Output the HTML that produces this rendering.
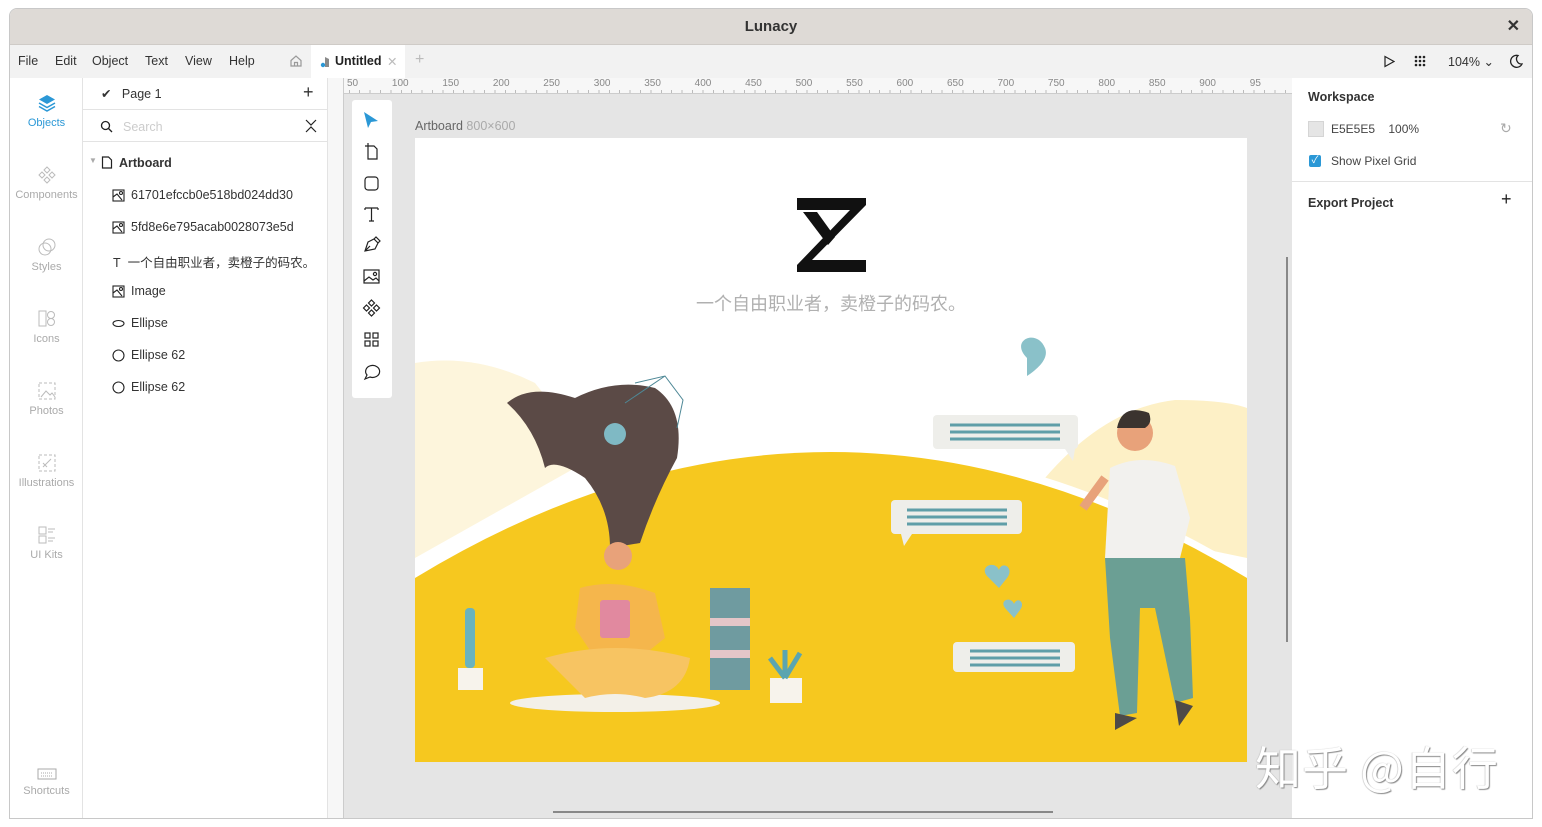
<!DOCTYPE html>
<html><head><meta charset="utf-8"><style>
*{margin:0;padding:0;box-sizing:border-box}
body{width:1542px;height:827px;background:#fff;font-family:"Liberation Sans","Noto Sans CJK SC",sans-serif;position:relative;overflow:hidden;font-size:12px;color:#222}
.a{position:absolute}
.win{left:9px;top:8px;width:1524px;height:811px;border:1px solid #c8c8c8;border-radius:8px 8px 0 0;overflow:hidden;background:#fff}
.title{left:0;top:0;width:100%;height:36px;background:#dedad6;border-bottom:1px solid #cfcbc7;text-align:center;font-weight:bold;font-size:15px;line-height:36px;color:#333}
.menu{left:0;top:36px;width:100%;height:33px;background:#f2f2f2}
.menu span{position:absolute;top:9px;font-size:12.5px;color:#333}
.rail{left:0;top:69px;width:73px;height:742px;background:#fff;border-right:1px solid #e3e3e3}
.rail .it{position:absolute;left:0;width:73px;text-align:center;font-size:11px;color:#aaa}
.layers{left:73px;top:69px;width:245px;height:742px;background:#fff;border-right:1px solid #e3e3e3}
.row{position:absolute;left:0;font-size:12.5px;color:#333}
.canvas{left:318px;top:69px;width:964px;height:742px;background:#e5e5e5}
.right{left:1282px;top:69px;width:242px;height:742px;background:#fff}
</style></head><body>
<div class="a win">
 <div class="a title">Lunacy<span class="a" style="right:12px;top:0;font-size:16px">✕</span></div>
 <div class="a menu">
  <span style="left:8px">File</span><span style="left:45px">Edit</span><span style="left:82px">Object</span><span style="left:135px">Text</span><span style="left:175px">View</span><span style="left:219px">Help</span>
  <svg class="a" style="left:279px;top:9px" width="14" height="14" viewBox="0 0 14 14" fill="none" stroke="#999" stroke-width="1.2"><path d="M2 6.5L7 2l5 4.5V12H2z M5.5 12V8.5h3V12"/></svg>
  <div class="a" style="left:301px;top:0;width:94px;height:33px;background:#fff"></div>
  <svg class="a" style="left:310px;top:11px" width="10" height="12"><path d="M5 1l4 2v8H5z" fill="#8a8a8a"/><circle cx="3" cy="9" r="2.2" fill="#2b98d6"/></svg>
  <span style="left:325px;font-weight:bold;color:#222">Untitled</span><span style="left:377px;color:#bbb">✕</span>
  <span style="left:405px;color:#bbb;font-size:16px;top:6px">+</span>
  <svg class="a" style="left:1373px;top:10px" width="12" height="13" fill="none" stroke="#222" stroke-width="1.2"><path d="M2 1.5L11 6.5 2 11.5z"/></svg>
  <svg class="a" style="left:1404px;top:10px" width="12" height="12" fill="#222"><circle cx="2" cy="2" r="1.3"/><circle cx="6" cy="2" r="1.3"/><circle cx="10" cy="2" r="1.3"/><circle cx="2" cy="6" r="1.3"/><circle cx="6" cy="6" r="1.3"/><circle cx="10" cy="6" r="1.3"/><circle cx="2" cy="10" r="1.3"/><circle cx="6" cy="10" r="1.3"/><circle cx="10" cy="10" r="1.3"/></svg>
  <span style="left:1438px">104% ⌄</span>
  <svg class="a" style="left:1499px;top:9px" width="14" height="14" fill="none" stroke="#222" stroke-width="1.3"><path d="M9 1.5A6 6 0 1 0 13 10 5 5 0 0 1 9 1.5z"/></svg>
 </div>
 <div class="a rail">
  <div class="it" style="top:14px;color:#2b98d6"><svg width="22" height="22" viewBox="0 0 22 22"><path d="M11 3l8 4.5-8 4.5-8-4.5z" fill="#2b98d6"/><path d="M3 11l8 4.5 8-4.5M3 14.5l8 4.5 8-4.5" fill="none" stroke="#2b98d6" stroke-width="1.5"/></svg><br>Objects</div>
  <div class="it" style="top:86px"><svg width="22" height="22" fill="none" stroke="#bbb"><path d="M11 3l3 3-3 3-3-3zM6 8l3 3-3 3-3-3zM16 8l3 3-3 3-3-3zM11 13l3 3-3 3-3-3z"/></svg><br>Components</div>
  <div class="it" style="top:158px"><svg width="22" height="22" fill="none" stroke="#bbb"><circle cx="9" cy="13" r="6"/><circle cx="13" cy="9" r="6"/></svg><br>Styles</div>
  <div class="it" style="top:230px"><svg width="22" height="22" fill="none" stroke="#bbb"><rect x="3" y="3" width="7" height="15"/><circle cx="15" cy="7" r="3.5"/><circle cx="15" cy="14" r="3.5"/></svg><br>Icons</div>
  <div class="it" style="top:302px"><svg width="22" height="22" fill="none" stroke="#bbb"><rect x="3" y="3" width="16" height="16" stroke-dasharray="3 2"/><path d="M5 17l5-6 4 4 2-2 3 4"/></svg><br>Photos</div>
  <div class="it" style="top:374px"><svg width="22" height="22" fill="none" stroke="#bbb"><rect x="3" y="3" width="16" height="16" stroke-dasharray="3 2"/><path d="M7 15l8-8M7 11l4 4"/></svg><br>Illustrations</div>
  <div class="it" style="top:446px"><svg width="22" height="22" fill="none" stroke="#bbb"><rect x="3" y="3" width="7" height="7"/><rect x="3" y="12" width="7" height="7"/><path d="M12 5h7M12 8h5M12 14h7M12 17h5"/></svg><br>UI Kits</div>
  <div class="it" style="top:688px"><svg width="22" height="16" fill="none" stroke="#aaa"><rect x="2" y="3" width="18" height="10"/><path d="M5 7h12M5 10h12" stroke-dasharray="1 1"/></svg><br>Shortcuts</div>
 </div>
 <div class="a layers">
  <div class="row" style="top:8px;left:18px">✔&nbsp;&nbsp;&nbsp;<b style="font-weight:normal">Page 1</b></div>
  <div class="row" style="top:4px;left:220px;font-size:18px">+</div>
  <div class="a" style="top:31px;left:0;width:245px;border-top:1px solid #e3e3e3"></div>
  <svg class="a" style="left:17px;top:42px" width="13" height="13" fill="none" stroke="#222" stroke-width="1.3"><circle cx="5.5" cy="5.5" r="4"/><path d="M8.5 8.5l3.5 3.5"/></svg>
  <div class="row" style="top:42px;left:40px;color:#ccc">Search</div>
  <svg class="a" style="left:222px;top:41px" width="12" height="14" fill="none" stroke="#222" stroke-width="1.2"><path d="M1 1l5 5 5-5M1 13l5-5 5 5"/></svg>
  <div class="a" style="top:63px;left:0;width:245px;border-top:1px solid #e3e3e3"></div>
  <div class="row" style="top:78px;left:6px;font-size:8px;color:#aaa">▼</div>
  <svg class="a" style="left:18px;top:78px" width="12" height="13" fill="none" stroke="#222" stroke-width="1.2"><path d="M1.5 1h6l3 3v8h-9z"/></svg>
  <div class="row" style="top:78px;left:36px;font-weight:bold">Artboard</div>
  <div class="row" style="top:110px;left:48px">61701efccb0e518bd024dd30</div>
  <div class="row" style="top:142px;left:48px">5fd8e6e795acab0028073e5d</div>
  <div class="row" style="top:174px;left:30px">T&nbsp;&nbsp;一个自由职业者，卖橙子的码农。</div>
  <div class="row" style="top:206px;left:48px">Image</div>
  <div class="row" style="top:238px;left:48px">Ellipse</div>
  <div class="row" style="top:270px;left:48px">Ellipse 62</div>
  <div class="row" style="top:302px;left:48px">Ellipse 62</div>
  <svg class="a" style="left:29px;top:111px" width="14" height="210" fill="none" stroke="#222" stroke-width="1.1"><g><rect x="1" y="1" width="11" height="11"/><path d="M1 8l4-3 5 6"/><circle cx="9" cy="4" r="1.5"/></g><g transform="translate(0,32)"><rect x="1" y="1" width="11" height="11"/><path d="M1 8l4-3 5 6"/><circle cx="9" cy="4" r="1.5"/></g><g transform="translate(0,96)"><rect x="1" y="1" width="11" height="11"/><path d="M1 8l4-3 5 6"/><circle cx="9" cy="4" r="1.5"/></g><ellipse cx="6.5" cy="134.5" rx="5.5" ry="3"/><circle cx="6.5" cy="166.5" r="5.5"/><circle cx="6.5" cy="198.5" r="5.5"/></svg>
 </div>
 <div class="a canvas">
  <div class="a" style="left:0;top:0;width:964px;height:16px;background:#f7f7f7;border-bottom:1px solid #ccc;background-image:repeating-linear-gradient(90deg,#bbb 0 1px,transparent 1px 10.4px);background-size:100% 4px;background-repeat:no-repeat;background-position:0 12px"></div>
  <div class="a" style="left:0;top:0;width:16px;height:742px;background:#f7f7f7;border-right:1px solid #ccc"></div>
  <div class="a" style="left:19px;top:0px;font-size:10px;color:#888;word-spacing:31px;white-space:nowrap">50 100 150 200 250 300 350 400 450 500 550 600 650 700 750 800 850 900 95</div>
  <div class="a" style="left:24px;top:22px;width:40px;height:298px;background:#fff;border-radius:3px"></div>
  <svg class="a" style="left:33px;top:31px" width="24" height="284" fill="none" stroke="#222" stroke-width="1.2">
   <path d="M3 3l14 9-7 1-3 6z" fill="#2b98d6" stroke="none"/>
   <path d="M4 37h3v-3M7 37l6 0 3 3v10H7z"/>
   <rect x="4" y="68" width="13" height="13" rx="3"/>
   <path d="M4 99h13M10.5 99v13M8 112h5M4 99v2M17 99v2"/>
   <path d="M4 142l3-9 6-3 4 4-3 6zM4 142l5-5M13 130l2-2 4 4-2 2"/>
   <rect x="3" y="161" width="15" height="13"/><path d="M3 172l5-4 4 3 3-2 3 3"/><circle cx="14" cy="165" r="1.6"/>
   <path d="M10.5 191l3 3-3 3-3-3zM5.5 196l3 3-3 3-3-3zM15.5 196l3 3-3 3-3-3zM10.5 201l3 3-3 3-3-3z"/>
   <rect x="4" y="224" width="5" height="5"/><rect x="12" y="224" width="5" height="5"/><rect x="4" y="232" width="5" height="5"/><rect x="12" y="232" width="5" height="5"/>
   <path d="M4 270l2-4a7 6 0 1 1 3 2z"/>
  </svg>
  <div class="a" style="left:87px;top:41px;font-size:12.5px;color:#666">Artboard <span style="color:#aaa">800×600</span></div>
  <div class="a" style="left:958px;top:179px;width:2px;height:385px;background:#888"></div>
  <div class="a" style="left:225px;top:733px;width:500px;height:2px;background:#888"></div>
  <svg class="a" style="left:87px;top:60px" width="832" height="624" viewBox="0 0 832 624">
   <rect width="832" height="624" fill="#fff"/>
   <path d="M0 225Q60 215 120 245Q150 280 160 330L0 420z" fill="#fdf5dc"/>
   <path d="M630 340Q690 270 760 262Q810 262 832 270V420L640 380z" fill="#fdf0c6"/>
   <path d="M0 432Q415 180 832 432V624H0z" fill="#fff"/>
   <path d="M0 440Q415 188 832 440V624H0z" fill="#f6c81f"/>
   <g transform="translate(382,60)"><path d="M0 0H69V7L15 62H69V74H0V67L53 12H0z" fill="#111"/><path d="M6 14H20L38 39 31 47z" fill="#111"/></g>
   <text x="416" y="172" text-anchor="middle" font-family="Liberation Sans,Noto Sans CJK SC,sans-serif" font-size="18" fill="#b0b0b0">一个自由职业者，卖橙子的码农。</text>
   <path d="M92 265Q115 245 160 260Q200 240 240 250Q270 270 262 320Q240 360 225 405L195 410Q195 370 170 340Q140 320 130 330Q120 290 92 265z" fill="#5b4a46"/>
   <circle cx="200" cy="296" r="11" fill="#7fb9c4"/>
   <path d="M220 245L250 238 268 262 262 290M210 265L250 238" stroke="#4e8896" fill="none"/>
   <ellipse cx="200" cy="565" rx="105" ry="9" fill="#f3f0e8"/>
   <circle cx="203" cy="418" r="14" fill="#e8a27a"/>
   <path d="M165 450Q200 440 240 455L250 500 225 520 180 520 160 490z" fill="#f5b64c"/>
   <rect x="185" y="462" width="30" height="38" rx="3" fill="#e1899f"/>
   <path d="M130 520Q200 500 275 520Q270 555 230 560 200 552 170 560 130 550z" fill="#f7c462"/>
   <rect x="43" y="530" width="25" height="22" fill="#f7f3ec"/><rect x="50" y="470" width="10" height="60" rx="4" fill="#6ab3bf"/>
   <g fill="#6f9ba0"><rect x="295" y="450" width="40" height="102"/></g>
   <g fill="#e4c6c8"><rect x="295" y="480" width="40" height="8"/><rect x="295" y="512" width="40" height="8"/></g>
   <rect x="355" y="540" width="32" height="25" fill="#f7f3ec"/><path d="M370 540l-15-20M370 540l15-25M370 540v-28" stroke="#5ba5b0" stroke-width="5"/>
   <path d="M612 220c-18-18 10-30 18-10 4 10-6 20-18 28z" fill="#8ac1c9"/>
   <rect x="518" y="277" width="145" height="34" rx="4" fill="#eeeeea"/><path d="M650 311l8 12 2-12z" fill="#eeeeea"/>
   <g stroke="#5f9ea8" stroke-width="3"><path d="M535 287h110M535 294h110M535 301h110"/></g>
   <rect x="476" y="362" width="131" height="34" rx="4" fill="#eeeeea"/><path d="M486 396l3 12 8-12z" fill="#eeeeea"/>
   <g stroke="#5f9ea8" stroke-width="3"><path d="M492 372h100M492 379h100M492 386h100"/></g>
   <rect x="538" y="504" width="122" height="30" rx="4" fill="#eeeeea"/>
   <g stroke="#5f9ea8" stroke-width="3"><path d="M555 513h90M555 520h90M555 527h90"/></g>
   <path d="M572 438c-8-10 8-16 12-6 3-10 16-2 8 8l-8 10z" fill="#8ac1c9"/>
   <path d="M590 470c-6-8 6-12 9-4 3-8 12-2 6 6l-6 8z" fill="#8ac1c9"/>
   <circle cx="720" cy="295" r="18" fill="#e8a27a"/><path d="M702 290q5-25 32-15 4 10-4 15z" fill="#3b332f"/>
   <path d="M695 330Q725 315 760 328L775 380 765 420H690z" fill="#f2f1ee"/>
   <path d="M690 420H770L775 480 778 560 760 565 740 470 725 470 722 575 705 578 695 500z" fill="#6b9f94"/>
   <path d="M700 575l22 5-22 12z M760 562l18 6-14 20z" fill="#4e4a48"/>
   <path d="M690 340L668 370" stroke="#e8a27a" stroke-width="9"/>
  </svg>
 </div>
 <div class="a right">
  <div class="a" style="left:16px;top:12px;font-size:12.5px;font-weight:bold;color:#333">Workspace</div>
  <div class="a" style="left:16px;top:43px;width:16px;height:16px;background:#e5e5e5;border:1px solid #d5d5d5"></div>
  <div class="a" style="left:39px;top:44px;font-size:12px;color:#444">E5E5E5&nbsp;&nbsp;&nbsp;&nbsp;100%</div>
  <div class="a" style="left:208px;top:42px;font-size:14px;color:#aaa">↻</div>
  <div class="a" style="left:17px;top:77px;width:12px;height:12px;background:#2b98d6;border-radius:2px;color:#fff;font-size:10px;line-height:12px;text-align:center">✓</div>
  <div class="a" style="left:39px;top:76px;font-size:12px;color:#444">Show Pixel Grid</div>
  <div class="a" style="left:0;top:103px;width:242px;border-top:1px solid #e3e3e3"></div>
  <div class="a" style="left:16px;top:118px;font-size:12.5px;font-weight:bold;color:#333">Export Project</div>
  <div class="a" style="left:209px;top:111px;font-size:18px;color:#222">+</div>
 </div>
</div>
<div class="a" style="left:1255px;top:733px;font-size:46px;color:#fff;text-shadow:1px 1px 1px #888,-0.5px 0 1px #bbb;font-family:'Noto Sans CJK SC',sans-serif;white-space:nowrap;letter-spacing:1px">知乎 @自行</div>
</body></html>
